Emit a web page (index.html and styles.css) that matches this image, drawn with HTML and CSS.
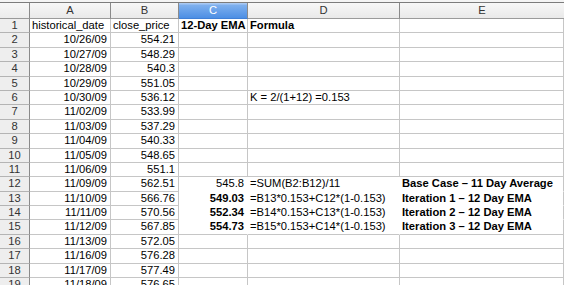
FILE: index.html
```html
<!DOCTYPE html>
<html>
<head>
<meta charset="utf-8">
<link rel="stylesheet" href="styles.css">
</head>
<body>
<div class="sheet">
  <div class="corner"></div>
  <div class="colhead">A</div>
  <div class="colhead">B</div>
  <div class="colhead sel">C</div>
  <div class="colhead">D</div>
  <div class="colhead last">E</div>

  <div class="rowhead">1</div>
  <div class="cell">historical_date</div>
  <div class="cell">close_price</div>
  <div class="cell b">12-Day EMA</div>
  <div class="cell b">Formula</div>
  <div class="cell"></div>

  <div class="rowhead">2</div><div class="cell r">10/26/09</div><div class="cell r">554.21</div><div class="cell"></div><div class="cell"></div><div class="cell"></div>
  <div class="rowhead">3</div><div class="cell r">10/27/09</div><div class="cell r">548.29</div><div class="cell"></div><div class="cell"></div><div class="cell"></div>
  <div class="rowhead">4</div><div class="cell r">10/28/09</div><div class="cell r">540.3</div><div class="cell"></div><div class="cell"></div><div class="cell"></div>
  <div class="rowhead">5</div><div class="cell r">10/29/09</div><div class="cell r">551.05</div><div class="cell"></div><div class="cell"></div><div class="cell"></div>
  <div class="rowhead">6</div><div class="cell r">10/30/09</div><div class="cell r">536.12</div><div class="cell"></div><div class="cell">K = 2/(1+12) =0.153</div><div class="cell"></div>
  <div class="rowhead">7</div><div class="cell r">11/02/09</div><div class="cell r">533.99</div><div class="cell"></div><div class="cell"></div><div class="cell"></div>
  <div class="rowhead">8</div><div class="cell r">11/03/09</div><div class="cell r">537.29</div><div class="cell"></div><div class="cell"></div><div class="cell"></div>
  <div class="rowhead">9</div><div class="cell r">11/04/09</div><div class="cell r">540.33</div><div class="cell"></div><div class="cell"></div><div class="cell"></div>
  <div class="rowhead">10</div><div class="cell r">11/05/09</div><div class="cell r">548.65</div><div class="cell"></div><div class="cell"></div><div class="cell"></div>
  <div class="rowhead">11</div><div class="cell r">11/06/09</div><div class="cell r">551.1</div><div class="cell"></div><div class="cell"></div><div class="cell"></div>
  <div class="rowhead">12</div><div class="cell r">11/09/09</div><div class="cell r">562.51</div><div class="cell r fill nb nr">545.8</div><div class="cell fill nb nr">=SUM(B2:B12)/11</div><div class="cell b fill nb">Base Case – 11 Day Average</div>
  <div class="rowhead">13</div><div class="cell r">11/10/09</div><div class="cell r">566.76</div><div class="cell r b fill nb nr">549.03</div><div class="cell fill nb nr">=B13*0.153+C12*(1-0.153)</div><div class="cell b fill nb">Iteration 1 – 12 Day EMA</div>
  <div class="rowhead">14</div><div class="cell r">11/11/09</div><div class="cell r">570.56</div><div class="cell r b fill nb nr">552.34</div><div class="cell fill nb nr">=B14*0.153+C13*(1-0.153)</div><div class="cell b fill nb">Iteration 2 – 12 Day EMA</div>
  <div class="rowhead">15</div><div class="cell r">11/12/09</div><div class="cell r">567.85</div><div class="cell r b fill nr">554.73</div><div class="cell fill nr">=B15*0.153+C14*(1-0.153)</div><div class="cell b fill">Iteration 3 – 12 Day EMA</div>
  <div class="rowhead">16</div><div class="cell r">11/13/09</div><div class="cell r">572.05</div><div class="cell"></div><div class="cell"></div><div class="cell"></div>
  <div class="rowhead">17</div><div class="cell r">11/16/09</div><div class="cell r">576.28</div><div class="cell"></div><div class="cell"></div><div class="cell"></div>
  <div class="rowhead">18</div><div class="cell r">11/17/09</div><div class="cell r">577.49</div><div class="cell"></div><div class="cell"></div><div class="cell"></div>
  <div class="rowhead">19</div><div class="cell r">11/18/09</div><div class="cell r">576.65</div><div class="cell"></div><div class="cell"></div><div class="cell"></div>
</div>
</body>
</html>
```

FILE: styles.css
```css
html, body {
  margin: 0;
  padding: 0;
  background: #f4f4f4;
  overflow: hidden;
}
body {
  padding-top: 2px;
  font-family: "Liberation Sans", Arial, sans-serif;
  font-size: 11.2px;
  color: #000;
}
.sheet {
  display: grid;
  grid-template-columns: 30px 81px 68px 69px 152px 1fr;
  grid-template-rows: 16px;
  grid-auto-rows: 14.4px;
  width: 564px;
  border-top: 1px solid #7c7c7c;
  background: #fff;
}
.corner {
  background: linear-gradient(#f7f7f7, #ececec);
  border-right: 1px solid #8a8a8a;
  border-bottom: 1px solid #9a9a9a;
  box-sizing: border-box;
}
.colhead {
  box-sizing: border-box;
  background: linear-gradient(#f7f7f7, #e9e9e9);
  border-right: 1px solid #8a8a8a;
  border-bottom: 1px solid #9a9a9a;
  color: #333;
  text-align: center;
  line-height: 15px;
}
.colhead.last {
  border-right: none;
}
.colhead.sel {
  background: linear-gradient(#a9c9f3 0, #a9c9f3 1px, #7fb0ee 2px, #4d8fe4);
  color: #fff;
  border-bottom-color: #3f7fd6;
}
.rowhead {
  box-sizing: border-box;
  background: #eeeeee;
  border-right: 1px solid #8a8a8a;
  border-bottom: 1px solid #b4b4b4;
  color: #333;
  text-align: center;
  line-height: 13.4px;
}
.cell {
  box-sizing: border-box;
  border-right: 1px solid #c6c6c6;
  border-bottom: 1px solid #c6c6c6;
  padding: 0 2px;
  line-height: 13.4px;
  white-space: nowrap;
  overflow: hidden;
}
.cell.r {
  text-align: right;
  padding-right: 3px;
}
.cell.b {
  font-weight: bold;
}
.cell.fill {
  background: #fff;
}
.cell.nb {
  border-bottom-color: #fff;
}
.cell.nr {
  border-right-color: #fff;
}
```
